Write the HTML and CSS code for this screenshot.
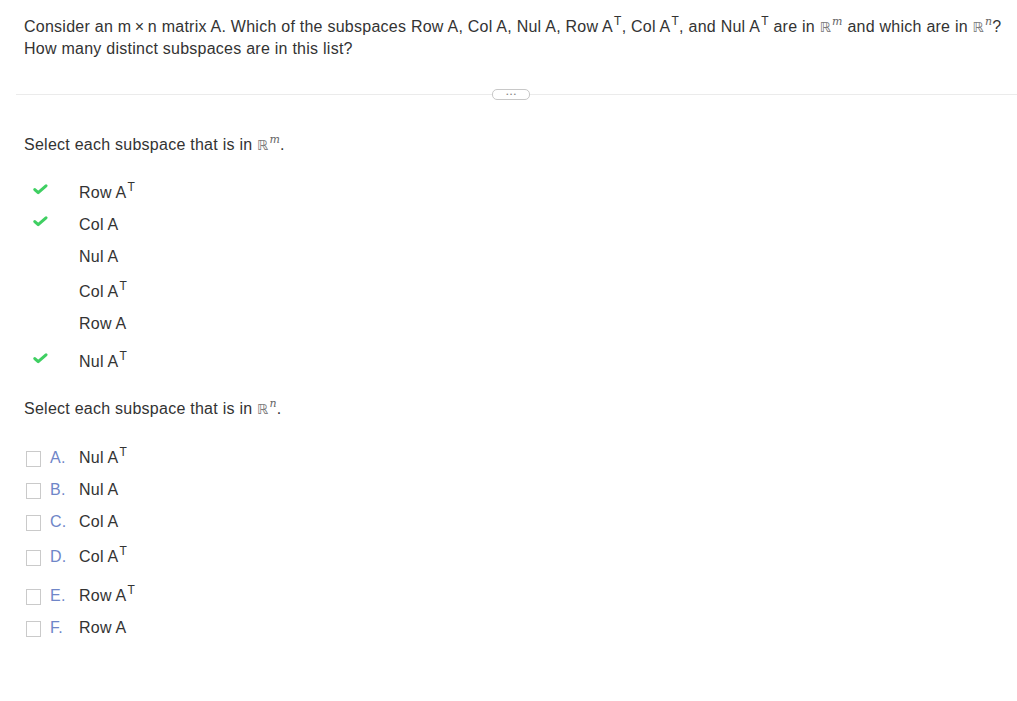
FILE: index.html
```html
<!DOCTYPE html>
<html>
<head>
<meta charset="utf-8">
<link rel="stylesheet" href="styles.css">
</head>
<body>
<div class="page">
  <div class="question">
    Consider an <span class="v">m</span>&thinsp;×&thinsp;<span class="v">n</span> matrix A. Which of the subspaces Row A, Col A, Nul A, Row A<sup>T</sup>, Col A<sup>T</sup>, and Nul A<sup>T</sup> are in <span class="bb">ℝ</span><sup class="it">m</sup> and which are in <span class="bb">ℝ</span><sup class="it">n</sup>?<br>
    How many distinct subspaces are in this list?
  </div>
  <div class="divider"><span class="pill">• • •</span></div>

  <div class="prompt">Select each subspace that is in <span class="bb">ℝ</span><sup class="it">m</sup>.</div>
  <ul class="answers">
    <li><span class="mark"><svg width="15" height="11" viewBox="0 0 15 11"><path d="M1.8 5.6 L5.2 8.7 L13 1.8" fill="none" stroke="#3fcf62" stroke-width="3" stroke-linecap="round" stroke-linejoin="round"/></svg></span><span>Row A<sup>T</sup></span></li>
    <li><span class="mark"><svg width="15" height="11" viewBox="0 0 15 11"><path d="M1.8 5.6 L5.2 8.7 L13 1.8" fill="none" stroke="#3fcf62" stroke-width="3" stroke-linecap="round" stroke-linejoin="round"/></svg></span><span>Col A</span></li>
    <li><span class="mark"></span><span>Nul A</span></li>
    <li class="sup"><span class="mark"></span><span>Col A<sup>T</sup></span></li>
    <li><span class="mark"></span><span>Row A</span></li>
    <li class="tall2"><span class="mark"><svg width="15" height="11" viewBox="0 0 15 11"><path d="M1.8 5.6 L5.2 8.7 L13 1.8" fill="none" stroke="#3fcf62" stroke-width="3" stroke-linecap="round" stroke-linejoin="round"/></svg></span><span>Nul A<sup>T</sup></span></li>
  </ul>

  <div class="prompt second">Select each subspace that is in <span class="bb">ℝ</span><sup class="it">n</sup>.</div>
  <ul class="options">
    <li><span class="box"></span><span class="letter">A.</span><span>Nul A<sup>T</sup></span></li>
    <li><span class="box"></span><span class="letter">B.</span><span>Nul A</span></li>
    <li><span class="box"></span><span class="letter">C.</span><span>Col A</span></li>
    <li class="sup"><span class="box"></span><span class="letter">D.</span><span>Col A<sup>T</sup></span></li>
    <li class="tall"><span class="box"></span><span class="letter">E.</span><span>Row A<sup>T</sup></span></li>
    <li><span class="box"></span><span class="letter">F.</span><span>Row A</span></li>
  </ul>
</div>
</body>
</html>
```
FILE: styles.css
```css
html, body {
  margin: 0;
  padding: 0;
  background: #ffffff;
}
body {
  font-family: "Liberation Sans", Arial, sans-serif;
  font-size: 16px;
  letter-spacing: 0.25px;
  color: #333333;
}
.page {
  padding: 16px 0 0 16px;
}
.question {
  padding-left: 8px;
  line-height: 21px;
}
sup {
  font-size: 12px;
  line-height: 0;
  vertical-align: 7px;
  margin-left: 1px;
}
sup.it {
  font-family: "DejaVu Serif", serif;
  font-style: italic;
  font-size: 11px;
  color: #666;
}
.bb {
  font-family: "DejaVu Sans", sans-serif;
  font-size: 14px;
  color: #777;
}
.divider {
  margin-top: 35px;
  height: 1px;
  background: #ebebeb;
  position: relative;
}
.pill {
  position: absolute;
  left: 476px;
  top: -5px;
  width: 36px;
  height: 9px;
  border: 1px solid #c8c8c8;
  border-radius: 5px;
  background: #fff;
  font-size: 6px;
  line-height: 9px;
  text-align: center;
  color: #888;
  letter-spacing: 0;
}
.prompt {
  margin-top: 40px;
  padding-left: 8px;
  line-height: 20px;
}
.prompt.second {
  margin-top: 28px;
}
.answers, .options {
  list-style: none;
  margin: 0;
  padding: 0;
  display: flex;
  flex-direction: column;
  gap: 13px;
}
.answers { margin-top: 28px; }
.options { margin-top: 29px; }
.answers li, .options li {
  display: flex;
  align-items: flex-end;
  height: 19px;
}
li.sup { margin-top: 3px; }
li.tall { margin-top: 7px; }
li.tall2 { margin-top: 6px; }
.mark {
  width: 63px;
  padding-left: 17px;
  box-sizing: border-box;
  display: inline-flex;
  align-items: center;
  height: 19px;
  padding-bottom: 6px;
}
.box {
  width: 13px;
  height: 14px;
  border: 1px solid #cacaca;
  margin: 0 9px 0 10px;
  flex: none;
}
.letter {
  color: #6f86c8;
  width: 29px;
}
```
